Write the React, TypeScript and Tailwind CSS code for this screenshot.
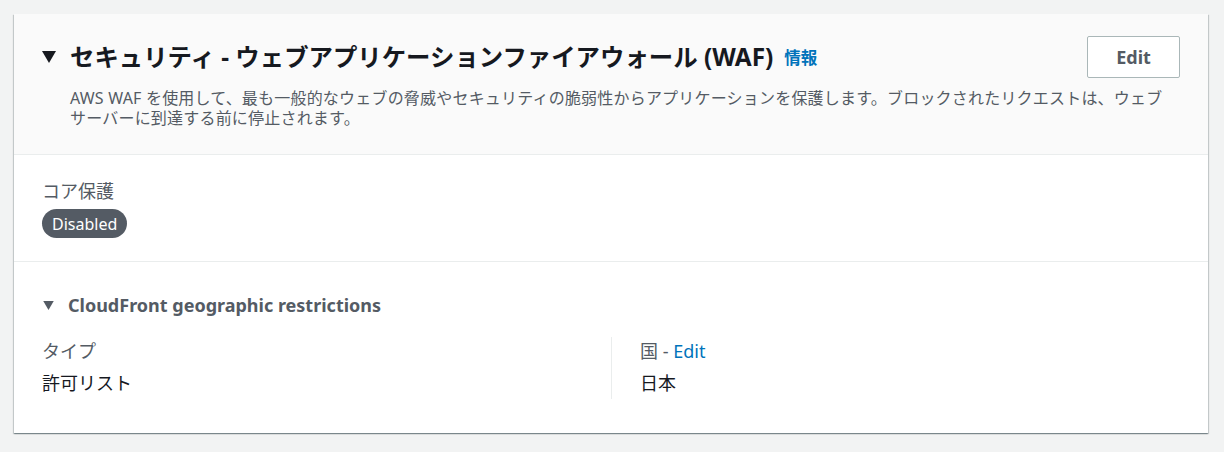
const Caret = ({ className }: { className: string }) => (
  <svg viewBox="0 0 14 12" className={className} aria-hidden="true">
    <path d="M0 0 H14 L7 12 Z" fill="currentColor" />
  </svg>
);

export default function App() {
  return (
    <div
      className="h-[452px] bg-[#f2f3f3] pt-[14px] pl-[14px] pr-[16px]"
      style={{ fontFamily: '"Noto Sans", "Noto Sans CJK JP", sans-serif' }}
    >
      <div className="bg-white shadow-[0_1px_1px_0_rgba(0,28,36,0.3),1px_1px_1px_0_rgba(0,28,36,0.15),-1px_1px_1px_0_rgba(0,28,36,0.15)]">
        {/* header */}
        <div className="h-[141px] bg-[#fafafa] border-b border-[#eaeded] px-[28px] pt-[22px]">
          <div className="flex items-center justify-between h-[42px]">
            <div className="flex items-center">
              <Caret className="w-[14px] h-[12px] text-[#16191f]" />
              <h2 className="ml-[14px] text-[24.4px] font-bold text-[#16191f] leading-[30px]">
                セキュリティ - ウェブアプリケーションファイアウォール (WAF)
              </h2>
              <a className="ml-[11px] text-[16.5px] font-bold text-[#0073bb] leading-[28px] mt-[2px]">
                情報
              </a>
            </div>
            <button className="w-[93px] h-[42px] border border-[#aab7b8] rounded-[2px] bg-white text-[18px] font-bold text-[#545b64]">
              Edit
            </button>
          </div>
          <p className="mt-[10px] ml-[28px] w-[1112px] text-[16px] tracking-[0.2px] leading-[20px] text-[#545b64]">
            AWS WAF を使用して、最も一般的なウェブの脅威やセキュリティの脆弱性からアプリケーションを保護します。ブロックされたリクエストは、ウェブ
            <br />
            サーバーに到達する前に停止されます。
          </p>
        </div>

        {/* core protection */}
        <div className="h-[107px] border-b border-[#eaeded] px-[28px] pt-[24px]">
          <div className="text-[18px] leading-[24px] text-[#545b64]">コア保護</div>
          <span className="mt-[6px] inline-flex items-center h-[29px] px-[10px] rounded-full bg-[#545b64] text-white text-[16px]">
            Disabled
          </span>
        </div>

        {/* geo restrictions */}
        <div className="h-[171px] px-[28px] pt-[31px]">
          <div className="flex items-center">
            <Caret className="w-[13px] h-[9px] text-[#545b64]" />
            <span className="ml-[13px] text-[18px] font-bold leading-[24px] text-[#545b64]">
              CloudFront geographic restrictions
            </span>
          </div>
          <div className="mt-[20px] grid grid-cols-2">
            <div className="pt-[2px] pb-[4px]">
              <div className="text-[18px] leading-[24px] text-[#545b64]">タイプ</div>
              <div className="mt-[8px] text-[18px] leading-[24px] text-[#16191f]">許可リスト</div>
            </div>
            <div className="border-l border-[#eaeded] pl-[28px] pt-[2px] pb-[4px]">
              <div className="text-[18px] leading-[24px] text-[#545b64]">
                国 - <a className="text-[#0073bb]">Edit</a>
              </div>
              <div className="mt-[8px] text-[18px] leading-[24px] text-[#16191f]">日本</div>
            </div>
          </div>
        </div>
      </div>
    </div>
  );
}
